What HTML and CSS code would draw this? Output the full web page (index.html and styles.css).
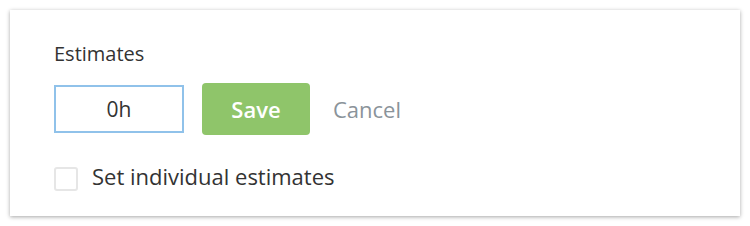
FILE: index.html
```html
<!DOCTYPE html>
<html lang="en">
<head>
    <meta charset="UTF-8">
    <title>Estimates</title>
    <link rel="stylesheet" href="styles.css">
</head>
<body>
    <div class="card">
        <div class="label">Estimates</div>
        <div class="row">
            <input type="text" class="hours" value="0h">
            <button class="save">Save</button>
            <button class="cancel">Cancel</button>
        </div>
        <label class="check">
            <span class="box"></span>
            <span class="check-text">Set individual estimates</span>
        </label>
    </div>
</body>
</html>
```

FILE: styles.css
```css
body {
    margin: 0;
    background: #fff;
    font-family: "Open Sans", "Liberation Sans", sans-serif;
    color: #333;
}

.card {
    margin: 10px;
    width: 730px;
    height: 206px;
    box-sizing: border-box;
    padding: 32px 44px 0;
    background: #fff;
    box-shadow: 0 1px 4px rgba(0, 0, 0, 0.35);
}

.label {
    font-size: 20px;
    line-height: 24px;
}

.row {
    display: flex;
    align-items: center;
    margin-top: 17px;
}

.hours {
    width: 130px;
    height: 48px;
    box-sizing: border-box;
    border: 2px solid #90c2ea;
    border-radius: 0;
    font-family: inherit;
    font-size: 21px;
    color: #333;
    text-align: center;
    padding: 0;
    outline: none;
}

.save {
    margin-left: 18px;
    width: 108px;
    height: 52px;
    border: none;
    border-radius: 4px;
    background: #8fc56a;
    color: #fff;
    font-family: inherit;
    font-size: 22px;
    font-weight: 600;
}

.cancel {
    margin-left: 23px;
    padding: 0;
    border: none;
    background: none;
    color: #8a939a;
    font-family: inherit;
    font-size: 22px;
}

.check {
    display: flex;
    align-items: flex-start;
    margin-top: 32px;
    font-size: 22px;
    line-height: 18px;
}

.box {
    width: 24px;
    height: 24px;
    box-sizing: border-box;
    border: 2px solid #e6e6e6;
    border-radius: 3px;
    margin-right: 14px;
}

.check-text {
    padding-top: 0;
}
```
